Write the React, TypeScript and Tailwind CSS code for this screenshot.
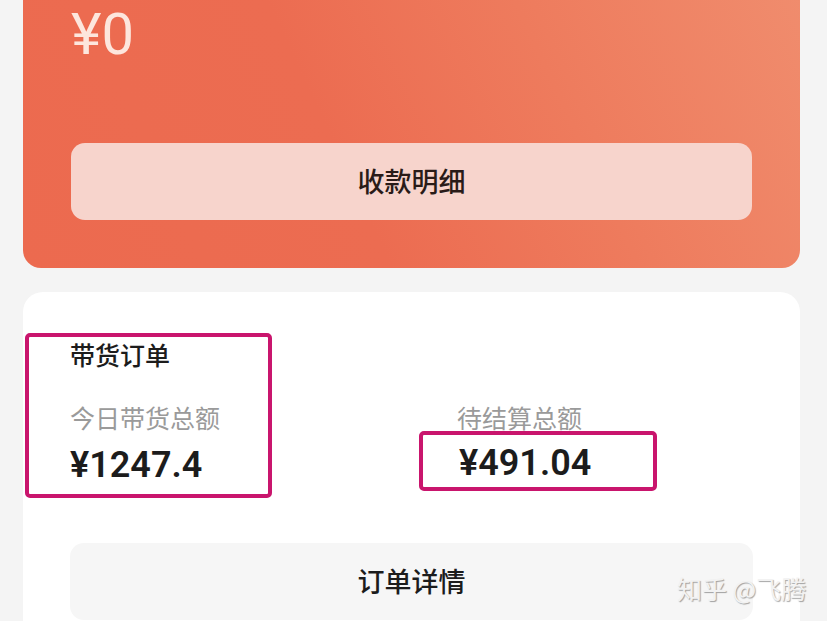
import React from "react";

const cjk = '"Noto Sans CJK SC", "Noto Sans", sans-serif';
const num = 'Roboto, "Noto Sans CJK SC", sans-serif';

export default function App() {
  return (
    <div
      className="relative h-[621px] w-[827px] overflow-hidden bg-[#f4f4f4] pl-[23px] pr-[27px]"
      style={{ fontFamily: cjk }}
    >
      {/* Orange balance card */}
      <div className="-mt-[40px] h-[308px] rounded-[18px] bg-[linear-gradient(245deg,#f08d6e_0%,#ee7b5d_33%,#ec6c51_60%,#ec6a4f_100%)] px-[48px] pt-[40px]">
        <div
          className="h-[68px] text-[58px] leading-[68px] text-[#fde6dd]"
          style={{ fontFamily: num }}
        >
          ¥0
        </div>
        <div className="mt-[75px] flex h-[77px] items-center justify-center rounded-[14px] bg-[#f7d4cc] text-[27px] font-medium text-[#2a1b18]">
          收款明细
        </div>
      </div>

      {/* White order card */}
      <div className="mt-[24px] h-[340px] rounded-t-[20px] bg-white px-[47px] pt-[44px]">
        <div className="text-[25px] font-medium leading-[36px] text-[#1c1c1c]">带货订单</div>
        <div className="mt-[27px] grid grid-cols-[387px_1fr]">
          <div>
            <div className="text-[25px] leading-[36px] text-[#9a9a9a]">今日带货总额</div>
            <div
              className="mt-[8px] text-[36px] font-semibold leading-[44px] text-[#1c1c1c]"
              style={{ fontFamily: num }}
            >
              ¥1247.4
            </div>
          </div>
          <div>
            <div className="text-[25px] leading-[36px] text-[#9a9a9a]">待结算总额</div>
            <div
              className="mt-[6px] pl-[2px] text-[36px] font-semibold leading-[44px] text-[#1c1c1c]"
              style={{ fontFamily: num }}
            >
              ¥491.04
            </div>
          </div>
        </div>
        <div className="mt-[56px] flex h-[77px] items-center justify-center rounded-[14px] bg-[#f6f6f6] text-[27px] font-medium text-[#1c1c1c]">
          订单详情
        </div>
      </div>

      {/* annotation boxes */}
      <div className="pointer-events-none absolute left-[25px] top-[333px] h-[165px] w-[247px] rounded-[5px] border-[4px] border-[#c9156d]" />
      <div className="pointer-events-none absolute left-[419px] top-[431px] h-[60px] w-[238px] rounded-[5px] border-[4px] border-[#c9156d]" />

      {/* watermark */}
      <div
        className="pointer-events-none absolute left-[677px] top-[570px] text-[25px] leading-[36px] text-[#f2f2f2]"
        style={{ textShadow: "1px 1px 1px rgba(0,0,0,0.35)" }}
      >
        知乎 @飞腾
      </div>
    </div>
  );
}
